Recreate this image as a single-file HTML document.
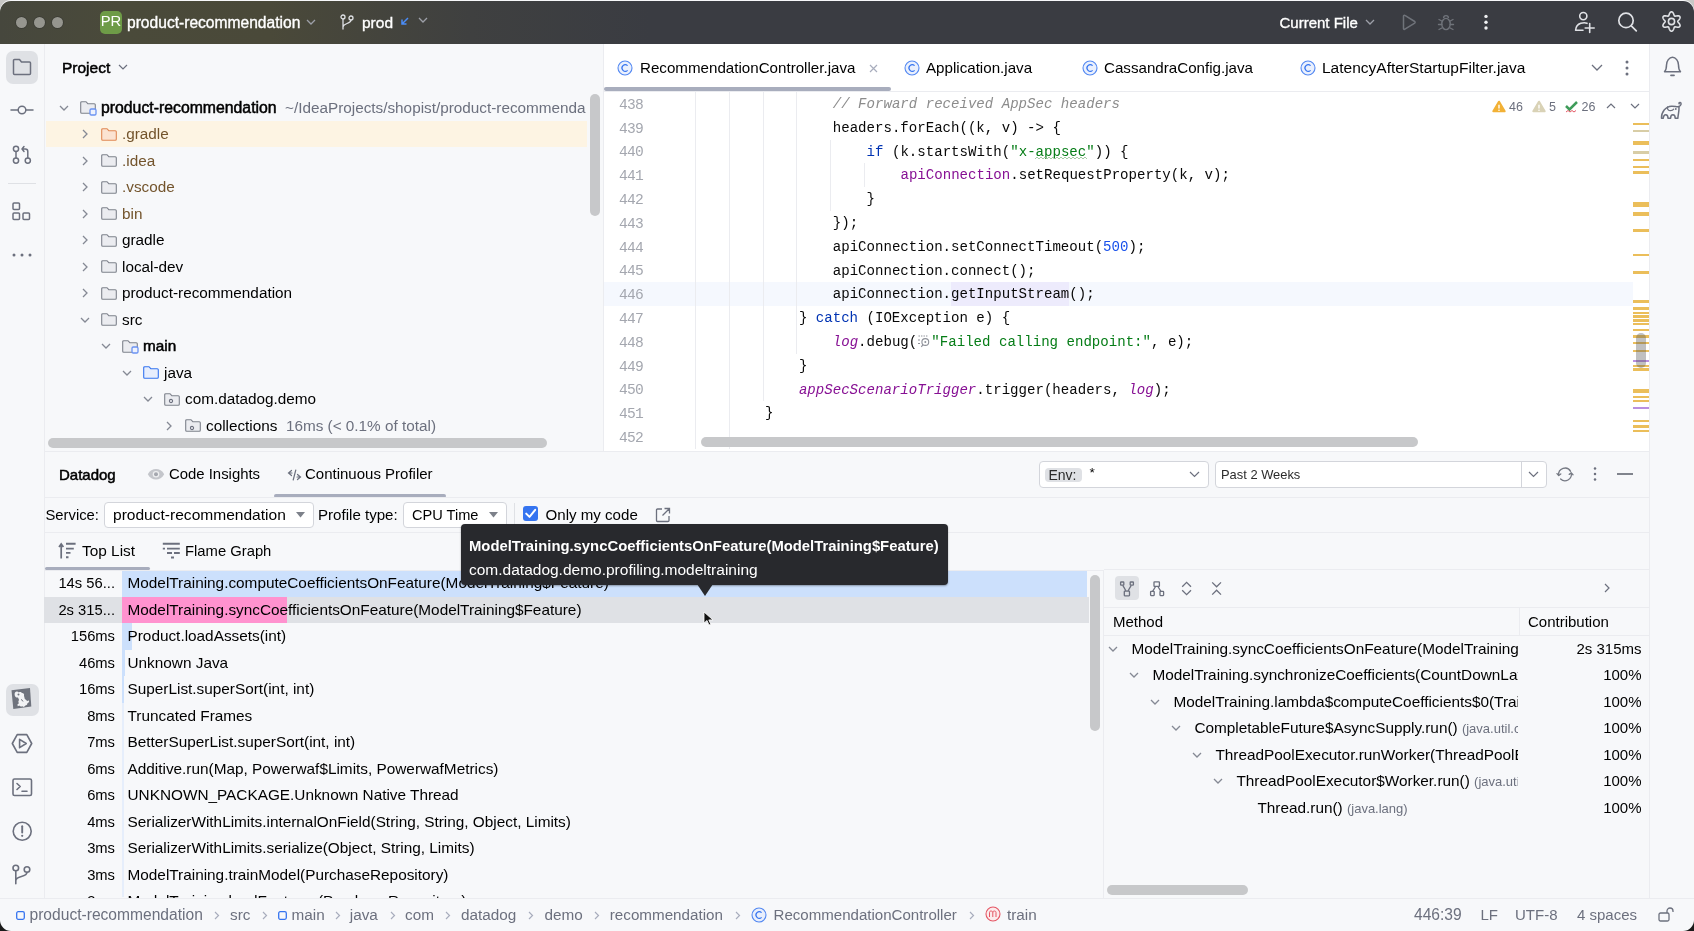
<!DOCTYPE html><html><head><meta charset="utf-8"><style>
*{margin:0;padding:0;box-sizing:border-box}
html,body{width:1694px;height:931px;overflow:hidden;background:#1a1a1a}
body{font-family:"Liberation Sans",sans-serif;font-size:15px;color:#000;position:relative}
.a{position:absolute;white-space:nowrap}
.t{position:absolute;white-space:nowrap;line-height:20px;height:20px}
svg{position:absolute;overflow:visible}
#win{will-change:transform;position:absolute;left:0;top:0;width:1694px;height:931px;background:#F7F8FA;border-radius:11px;overflow:hidden}
#topbg{position:absolute;left:0;top:0;width:1694px;height:14px;background:#c8c8c6}
#title{position:absolute;left:0;top:1px;width:1694px;height:43px;background:linear-gradient(90deg,#46473D 0px,#4A4A3A 120px,#4A4939 270px,#3F4040 470px,#3A3C42 650px,#3A3C42 100%);border-radius:11px 11px 0 0}
.tl{position:absolute;top:15.8px;width:11px;height:11px;border-radius:6px;background:#96968F;box-shadow:0 0 0 0.8px #3a3b34}
.wt{color:#fff}.med{-webkit-text-stroke:0.35px currentColor}.sbd{-webkit-text-stroke:0.5px currentColor}
.b{position:absolute;background:#EBECF0}
.g{color:#6C707E}
.ign{color:#73542C}
.code{position:absolute;font-family:"Liberation Mono",monospace;font-size:14.08px;line-height:24px;height:24px;white-space:pre;color:#080808}
.kw{color:#0033B3}.str{color:#067D17}.num{color:#1750EB}.fld{color:#871094}.cmt{color:#8C8C8C;font-style:italic}.it{font-style:italic}
.ln{position:absolute;font-family:"Liberation Mono",monospace;font-size:14.6px;letter-spacing:-0.85px;line-height:24px;height:24px;color:#A4A7AF;text-align:right;width:50.85px}
.sb{position:absolute;background:#C7C8CA;border-radius:5px}
.combo{position:absolute;background:#fff;border:1px solid #D3D5DB;border-radius:4px}
.ic{stroke:#6C707E;fill:none;stroke-width:1.3;stroke-linecap:round;stroke-linejoin:round}
</style></head><body>
<div id="topbg"></div><div id="win">
<div id="title">
<div class="tl" style="left:16.2px"></div>
<div class="tl" style="left:34px"></div>
<div class="tl" style="left:51.9px"></div>
</div>
<div class="a" style="left:100px;top:11px;width:22px;height:23px;background:#6E9B47;border-radius:5px"></div>
<div class="t wt" style="left:100px;top:11.30px;line-height:20px;height:20px;font-size:14.8px;width:22px;text-align:center;">PR</div>
<div class="t wt med" style="left:127px;top:12.80px;line-height:20px;height:20px;font-size:15.6px;">product-recommendation</div>
<svg style="left:306px;top:19px" width="10" height="6" viewBox="0 0 10 6" ><path d="M1 1l4 4 4-4" stroke="#9DA0A8" stroke-width="1.3" fill="none"/></svg>
<svg style="left:340px;top:14px" width="14" height="16" viewBox="0 0 14 16" ><circle cx="3" cy="3" r="2" class="ic" style="stroke:#DFE1E5"/><circle cx="11" cy="4" r="2" class="ic" style="stroke:#DFE1E5"/><path d="M3 5v10M11 6c0 4-8 3-8 7" class="ic" style="stroke:#DFE1E5"/></svg>
<div class="t wt med" style="left:362px;top:12.80px;line-height:20px;height:20px;font-size:15.5px;">prod</div>
<svg style="left:401px;top:17px" width="8" height="8" viewBox="0 0 8 8" ><path d="M7 1L1 7M1 2.5V7h4.5" stroke="#4B8DF8" stroke-width="1.5" fill="none"/></svg>
<svg style="left:418px;top:17px" width="10" height="6" viewBox="0 0 10 6" ><path d="M1 1l4 4 4-4" stroke="#9DA0A8" stroke-width="1.3" fill="none"/></svg>
<div class="t wt med" style="left:1279.5px;top:12.60px;line-height:20px;height:20px;font-size:15px;">Current File</div>
<svg style="left:1365px;top:19px" width="10" height="6" viewBox="0 0 10 6" ><path d="M1 1l4 4 4-4" stroke="#9DA0A8" stroke-width="1.3" fill="none"/></svg>
<svg style="left:1401px;top:14px" width="16" height="17" viewBox="0 0 16 17" ><path d="M2.5 2.2v12.2c0 .8.8 1.2 1.4.8l9.8-6.1c.6-.4.6-1.2 0-1.6L3.9 1.4c-.6-.4-1.4 0-1.4.8z" fill="none" stroke="#6F737A" stroke-width="1.5" stroke-linejoin="round"/></svg>
<svg style="left:1437px;top:13px" width="18" height="18" viewBox="0 0 18 18" ><path d="M6.6 5a2.4 2.4 0 0 1 4.8 0" fill="none" stroke="#6F737A" stroke-width="1.4"/><ellipse cx="9" cy="11" rx="4.2" ry="5.6" fill="none" stroke="#6F737A" stroke-width="1.4"/><path d="M4.8 8L2 6.5M4.8 11.5H1.5M4.8 15L2 16.5M13.2 8L16 6.5M13.2 11.5h3.3M13.2 15l2.8 1.5" fill="none" stroke="#6F737A" stroke-width="1.4" stroke-linecap="round"/></svg>
<svg style="left:1484px;top:13px" width="4" height="18" viewBox="0 0 4 18" ><circle cx="2" cy="3.4" r="1.7" fill="#F0F1F3"/><circle cx="2" cy="9.2" r="1.7" fill="#F0F1F3"/><circle cx="2" cy="15" r="1.7" fill="#F0F1F3"/></svg>
<svg style="left:1573px;top:12px" width="22" height="22" viewBox="0 0 22 22" ><circle cx="10.3" cy="4.1" r="3.6" fill="none" stroke="#DFE1E5" stroke-width="1.6"/><path d="M14 11.3C12 10.3 3.2 10 2.6 18.2H10" fill="none" stroke="#DFE1E5" stroke-width="1.6" stroke-linecap="round" stroke-linejoin="round"/><path d="M16.7 11.5v9M12.2 16h9" stroke="#DFE1E5" stroke-width="1.6" stroke-linecap="round"/></svg>
<svg style="left:1617px;top:11px" width="22" height="22" viewBox="0 0 22 22" ><circle cx="9" cy="9.4" r="7.2" fill="none" stroke="#DFE1E5" stroke-width="1.7"/><path d="M14.3 14.8l5 5" stroke="#DFE1E5" stroke-width="1.7" stroke-linecap="round"/></svg>
<svg style="left:1661px;top:11px" width="21" height="21" viewBox="0 0 21 21" ><path d="M10.50 0.80 L11.00 0.90 L11.48 1.18 L11.91 1.61 L12.27 2.16 L12.57 2.77 L12.81 3.39 L13.01 3.96 L13.19 4.45 L13.40 4.81 L13.65 5.04 L13.98 5.15 L14.39 5.14 L14.91 5.06 L15.50 4.95 L16.16 4.84 L16.84 4.80 L17.49 4.84 L18.08 4.99 L18.57 5.26 L18.90 5.65 L19.07 6.13 L19.06 6.69 L18.90 7.27 L18.61 7.87 L18.23 8.43 L17.81 8.95 L17.41 9.40 L17.09 9.81 L16.87 10.17 L16.80 10.50 L16.87 10.83 L17.09 11.19 L17.41 11.60 L17.81 12.05 L18.23 12.57 L18.61 13.13 L18.90 13.73 L19.06 14.31 L19.07 14.87 L18.90 15.35 L18.57 15.74 L18.08 16.01 L17.49 16.16 L16.84 16.20 L16.16 16.16 L15.50 16.05 L14.91 15.94 L14.39 15.86 L13.98 15.85 L13.65 15.96 L13.40 16.19 L13.19 16.55 L13.01 17.04 L12.81 17.61 L12.57 18.23 L12.27 18.84 L11.91 19.39 L11.48 19.82 L11.00 20.10 L10.50 20.20 L10.00 20.10 L9.52 19.82 L9.09 19.39 L8.73 18.84 L8.43 18.23 L8.19 17.61 L7.99 17.04 L7.81 16.55 L7.60 16.19 L7.35 15.96 L7.02 15.85 L6.61 15.86 L6.09 15.94 L5.50 16.05 L4.84 16.16 L4.16 16.20 L3.51 16.16 L2.92 16.01 L2.43 15.74 L2.10 15.35 L1.93 14.87 L1.94 14.31 L2.10 13.73 L2.39 13.13 L2.77 12.57 L3.19 12.05 L3.59 11.60 L3.91 11.19 L4.13 10.83 L4.20 10.50 L4.13 10.17 L3.91 9.81 L3.59 9.40 L3.19 8.95 L2.77 8.43 L2.39 7.87 L2.10 7.27 L1.94 6.69 L1.93 6.13 L2.10 5.65 L2.43 5.26 L2.92 4.99 L3.51 4.84 L4.16 4.80 L4.84 4.84 L5.50 4.95 L6.09 5.06 L6.61 5.14 L7.02 5.15 L7.35 5.04 L7.60 4.81 L7.81 4.45 L7.99 3.96 L8.19 3.39 L8.43 2.77 L8.73 2.16 L9.09 1.61 L9.52 1.18 L10.00 0.90 L10.50 0.80Z" fill="none" stroke="#DFE1E5" stroke-width="1.6" stroke-linejoin="round"/><circle cx="10.5" cy="10.5" r="3.1" fill="none" stroke="#DFE1E5" stroke-width="1.6"/></svg>
<div class="a" style="left:43.5px;top:44px;width:1px;height:854px;background:#EBECF0;"></div>
<div class="a" style="left:6px;top:51px;width:32px;height:33px;background:#DFE1E5;border-radius:7px"></div>
<svg style="left:12px;top:58px" width="20" height="18" viewBox="0 0 20 18" ><path d="M1.5 2.5a1 1 0 0 1 1-1h5l2 2.5h8a1 1 0 0 1 1 1v10.5a1 1 0 0 1-1 1h-15a1 1 0 0 1-1-1z" class="ic" style="stroke-width:1.5"/></svg>
<svg style="left:10px;top:103px" width="24" height="14" viewBox="0 0 24 14" ><path d="M1 7h7M16 7h7" class="ic" style="stroke-width:1.5"/><circle cx="12" cy="7" r="3.8" class="ic" style="stroke-width:1.5"/></svg>
<svg style="left:12px;top:145px" width="20" height="20" viewBox="0 0 20 20" ><circle cx="4" cy="3.8" r="2.6" class="ic" style="stroke-width:1.5"/><circle cx="4" cy="15.6" r="2.6" class="ic" style="stroke-width:1.5"/><circle cx="15.8" cy="15.6" r="2.6" class="ic" style="stroke-width:1.5"/><path d="M4 6.4v6.6M15.8 13V6.5c0-1.5-1-2.5-2.5-2.5H10M12 1.5l-2 2.5 2 2.5" class="ic" style="stroke-width:1.5"/></svg>
<div class="a" style="left:8px;top:183px;width:28px;height:1px;background:#DFE1E5;"></div>
<svg style="left:12px;top:202px" width="20" height="20" viewBox="0 0 20 20" ><rect x="1" y="1" width="6.5" height="6.5" rx="1" class="ic" style="stroke-width:1.5"/><rect x="1" y="11" width="6.5" height="6.5" rx="1" class="ic" style="stroke-width:1.5"/><rect x="11" y="11" width="6.5" height="6.5" rx="1" class="ic" style="stroke-width:1.5"/></svg>
<svg style="left:12px;top:253px" width="20" height="4" viewBox="0 0 20 4" ><circle cx="2" cy="2" r="1.5" fill="#6C707E"/><circle cx="10" cy="2" r="1.5" fill="#6C707E"/><circle cx="18" cy="2" r="1.5" fill="#6C707E"/></svg>
<div class="a" style="left:6px;top:683.5px;width:32.5px;height:32.5px;background:#DFE1E5;border-radius:7px"></div>
<svg style="left:11px;top:687px" width="22" height="24" viewBox="0 0 22 24" ><path d="M.5 3.2L19 1l1.3 18.5L2.3 22z" fill="#6F737D"/><path d="M4 5.5c1.2-1.5 3-1.2 3.8 0 1-.8 2.6-.6 3 .6 1.5-.2 2.7 1 2.2 2.6l.8 3.2c1 .5 2 1.2 2.2 2.3l1.6-1 .6 1.8-1.8 1.3c.2 1.2-.8 2.1-2 2.1l-1.5 1.6-1.6-.8c-1 .5-2.3.3-3-.6l-1.5.6-.4-1.6 1.5-1.4c-.8-1-.7-2.3.2-3.1L7 10.5C5.5 10.8 4 10 3.8 8.5 3.6 7.3 3.5 6.3 4 5.5z" fill="#F2F3F5"/><circle cx="7.5" cy="7.5" r="1" fill="#6F737D"/><path d="M10 12.5c1 .3 1.8 1 2 2" stroke="#6F737D" stroke-width="1" fill="none"/></svg>
<svg style="left:11px;top:733px" width="22" height="21" viewBox="0 0 22 21" ><path d="M6.2 1.6h9.6l4.9 8.9-4.9 8.9H6.2l-4.9-8.9z" class="ic" style="stroke-width:1.6"/><path d="M8.6 6.3l6.6 4.2-6.6 4.2z" class="ic" style="stroke-width:1.6"/></svg>
<svg style="left:11.5px;top:778px" width="21" height="19" viewBox="0 0 21 19" ><rect x="1" y="1" width="18.5" height="16.5" rx="1.5" class="ic" style="stroke-width:1.6"/><path d="M5 5.5l3.2 3L5 11.5M10 13.2h5" class="ic" style="stroke-width:1.6"/></svg>
<svg style="left:11.5px;top:821px" width="21" height="21" viewBox="0 0 21 21" ><circle cx="10.2" cy="10.2" r="9" class="ic" style="stroke-width:1.6"/><path d="M10.2 5.2v6.3" class="ic" style="stroke-width:1.9"/><circle cx="10.2" cy="14.8" r="1.1" fill="#6C707E"/></svg>
<svg style="left:12px;top:864px" width="20" height="21" viewBox="0 0 20 21" ><circle cx="3.8" cy="4" r="2.8" class="ic" style="stroke-width:1.6"/><circle cx="15" cy="5.5" r="2.8" class="ic" style="stroke-width:1.6"/><path d="M3.8 6.8v13M15 8.3c0 5.5-11.2 3-11.2 8.5" class="ic" style="stroke-width:1.6"/></svg>
<div class="t sbd" style="left:62px;top:57.50px;line-height:20px;height:20px;font-size:15.5px;">Project</div>
<svg style="left:118px;top:64px" width="10" height="6" viewBox="0 0 10 6" ><path d="M1 1l4 4 4-4" stroke="#6C707E" stroke-width="1.2" fill="none"/></svg>
<div class="a" style="left:46px;top:121px;width:541px;height:26px;background:#FDF4E3;"></div>
<svg style="left:59px;top:104.5px" width="10" height="6" viewBox="0 0 10 6" ><path d="M1 1l4 4 4-4" stroke="#858994" stroke-width="1.3" fill="none"/></svg>
<svg style="left:80px;top:101.0px" width="16" height="13" viewBox="0 0 16 13" ><path d="M.7 1.7a1 1 0 0 1 1-1h4.3l1.8 2h6.5a1 1 0 0 1 1 1v7.6a1 1 0 0 1-1 1h-12.6a1 1 0 0 1-1-1z" fill="#EBECF0" stroke="#7E828C" stroke-width="1.1"/></svg>
<svg style="left:89px;top:107.5px" width="8" height="8" viewBox="0 0 8 8" ><rect x="1" y="1" width="6" height="6" rx="1.3" fill="#EEF2FD" stroke="#6A92F2" stroke-width="1.3"/></svg>
<div class="t " style="left:101px;top:97.50px;line-height:20px;height:20px;font-size:15.3px;"><span class="sbd" style="font-size:15.8px">product-recommendation</span><span class="g" style="position:absolute;left:184px">~/IdeaProjects/shopist/product-recommenda</span></div>
<svg style="left:82px;top:129.0px" width="6" height="10" viewBox="0 0 6 10" ><path d="M1 1l4 4-4 4" stroke="#858994" stroke-width="1.3" fill="none"/></svg>
<svg style="left:101px;top:127.5px" width="16" height="13" viewBox="0 0 16 13" ><path d="M.7 1.7a1 1 0 0 1 1-1h4.3l1.8 2h6.5a1 1 0 0 1 1 1v7.6a1 1 0 0 1-1 1h-12.6a1 1 0 0 1-1-1z" fill="#FBE3D2" stroke="#E08855" stroke-width="1.1"/></svg>
<div class="t " style="left:122px;top:124.00px;line-height:20px;height:20px;font-size:15.3px;"><span class="ign">.gradle</span></div>
<svg style="left:82px;top:155.5px" width="6" height="10" viewBox="0 0 6 10" ><path d="M1 1l4 4-4 4" stroke="#858994" stroke-width="1.3" fill="none"/></svg>
<svg style="left:101px;top:154.0px" width="16" height="13" viewBox="0 0 16 13" ><path d="M.7 1.7a1 1 0 0 1 1-1h4.3l1.8 2h6.5a1 1 0 0 1 1 1v7.6a1 1 0 0 1-1 1h-12.6a1 1 0 0 1-1-1z" fill="#EBECF0" stroke="#7E828C" stroke-width="1.1"/></svg>
<div class="t " style="left:122px;top:150.50px;line-height:20px;height:20px;font-size:15.3px;"><span class="ign">.idea</span></div>
<svg style="left:82px;top:182.0px" width="6" height="10" viewBox="0 0 6 10" ><path d="M1 1l4 4-4 4" stroke="#858994" stroke-width="1.3" fill="none"/></svg>
<svg style="left:101px;top:180.5px" width="16" height="13" viewBox="0 0 16 13" ><path d="M.7 1.7a1 1 0 0 1 1-1h4.3l1.8 2h6.5a1 1 0 0 1 1 1v7.6a1 1 0 0 1-1 1h-12.6a1 1 0 0 1-1-1z" fill="#EBECF0" stroke="#7E828C" stroke-width="1.1"/></svg>
<div class="t " style="left:122px;top:177.00px;line-height:20px;height:20px;font-size:15.3px;"><span class="ign">.vscode</span></div>
<svg style="left:82px;top:208.5px" width="6" height="10" viewBox="0 0 6 10" ><path d="M1 1l4 4-4 4" stroke="#858994" stroke-width="1.3" fill="none"/></svg>
<svg style="left:101px;top:207.0px" width="16" height="13" viewBox="0 0 16 13" ><path d="M.7 1.7a1 1 0 0 1 1-1h4.3l1.8 2h6.5a1 1 0 0 1 1 1v7.6a1 1 0 0 1-1 1h-12.6a1 1 0 0 1-1-1z" fill="#EBECF0" stroke="#7E828C" stroke-width="1.1"/></svg>
<div class="t " style="left:122px;top:203.50px;line-height:20px;height:20px;font-size:15.3px;"><span class="ign">bin</span></div>
<svg style="left:82px;top:235.0px" width="6" height="10" viewBox="0 0 6 10" ><path d="M1 1l4 4-4 4" stroke="#858994" stroke-width="1.3" fill="none"/></svg>
<svg style="left:101px;top:233.5px" width="16" height="13" viewBox="0 0 16 13" ><path d="M.7 1.7a1 1 0 0 1 1-1h4.3l1.8 2h6.5a1 1 0 0 1 1 1v7.6a1 1 0 0 1-1 1h-12.6a1 1 0 0 1-1-1z" fill="#EBECF0" stroke="#7E828C" stroke-width="1.1"/></svg>
<div class="t " style="left:122px;top:230.00px;line-height:20px;height:20px;font-size:15.3px;">gradle</div>
<svg style="left:82px;top:261.5px" width="6" height="10" viewBox="0 0 6 10" ><path d="M1 1l4 4-4 4" stroke="#858994" stroke-width="1.3" fill="none"/></svg>
<svg style="left:101px;top:260.0px" width="16" height="13" viewBox="0 0 16 13" ><path d="M.7 1.7a1 1 0 0 1 1-1h4.3l1.8 2h6.5a1 1 0 0 1 1 1v7.6a1 1 0 0 1-1 1h-12.6a1 1 0 0 1-1-1z" fill="#EBECF0" stroke="#7E828C" stroke-width="1.1"/></svg>
<div class="t " style="left:122px;top:256.50px;line-height:20px;height:20px;font-size:15.3px;">local-dev</div>
<svg style="left:82px;top:288.0px" width="6" height="10" viewBox="0 0 6 10" ><path d="M1 1l4 4-4 4" stroke="#858994" stroke-width="1.3" fill="none"/></svg>
<svg style="left:101px;top:286.5px" width="16" height="13" viewBox="0 0 16 13" ><path d="M.7 1.7a1 1 0 0 1 1-1h4.3l1.8 2h6.5a1 1 0 0 1 1 1v7.6a1 1 0 0 1-1 1h-12.6a1 1 0 0 1-1-1z" fill="#EBECF0" stroke="#7E828C" stroke-width="1.1"/></svg>
<div class="t " style="left:122px;top:283.00px;line-height:20px;height:20px;font-size:15.3px;">product-recommendation</div>
<svg style="left:80px;top:316.5px" width="10" height="6" viewBox="0 0 10 6" ><path d="M1 1l4 4 4-4" stroke="#858994" stroke-width="1.3" fill="none"/></svg>
<svg style="left:101px;top:313.0px" width="16" height="13" viewBox="0 0 16 13" ><path d="M.7 1.7a1 1 0 0 1 1-1h4.3l1.8 2h6.5a1 1 0 0 1 1 1v7.6a1 1 0 0 1-1 1h-12.6a1 1 0 0 1-1-1z" fill="#EBECF0" stroke="#7E828C" stroke-width="1.1"/></svg>
<div class="t " style="left:122px;top:309.50px;line-height:20px;height:20px;font-size:15.3px;">src</div>
<svg style="left:101px;top:343.0px" width="10" height="6" viewBox="0 0 10 6" ><path d="M1 1l4 4 4-4" stroke="#858994" stroke-width="1.3" fill="none"/></svg>
<svg style="left:122px;top:339.5px" width="16" height="13" viewBox="0 0 16 13" ><path d="M.7 1.7a1 1 0 0 1 1-1h4.3l1.8 2h6.5a1 1 0 0 1 1 1v7.6a1 1 0 0 1-1 1h-12.6a1 1 0 0 1-1-1z" fill="#EBECF0" stroke="#7E828C" stroke-width="1.1"/></svg>
<svg style="left:131px;top:346.0px" width="8" height="8" viewBox="0 0 8 8" ><rect x="1" y="1" width="6" height="6" rx="1.3" fill="#EEF2FD" stroke="#6A92F2" stroke-width="1.3"/></svg>
<div class="t " style="left:143px;top:336.00px;line-height:20px;height:20px;font-size:15.3px;"><span class="sbd">main</span></div>
<svg style="left:122px;top:369.5px" width="10" height="6" viewBox="0 0 10 6" ><path d="M1 1l4 4 4-4" stroke="#858994" stroke-width="1.3" fill="none"/></svg>
<svg style="left:143px;top:366.0px" width="16" height="13" viewBox="0 0 16 13" ><path d="M.7 1.7a1 1 0 0 1 1-1h4.3l1.8 2h6.5a1 1 0 0 1 1 1v7.6a1 1 0 0 1-1 1h-12.6a1 1 0 0 1-1-1z" fill="#E7EEFD" stroke="#3574F0" stroke-width="1.1"/></svg>
<div class="t " style="left:164px;top:362.50px;line-height:20px;height:20px;font-size:15.3px;">java</div>
<svg style="left:143px;top:396.0px" width="10" height="6" viewBox="0 0 10 6" ><path d="M1 1l4 4 4-4" stroke="#858994" stroke-width="1.3" fill="none"/></svg>
<svg style="left:164px;top:392.5px" width="16" height="13" viewBox="0 0 16 13" ><path d="M.7 1.7a1 1 0 0 1 1-1h4.3l1.8 2h6.5a1 1 0 0 1 1 1v7.6a1 1 0 0 1-1 1h-12.6a1 1 0 0 1-1-1z" fill="#EBECF0" stroke="#7E828C" stroke-width="1.1"/></svg>
<svg style="left:168px;top:398.0px" width="6" height="6" viewBox="0 0 6 6" ><circle cx="3" cy="3" r="1.6" fill="none" stroke="#6C707E" stroke-width="1.1"/></svg>
<div class="t " style="left:185px;top:389.00px;line-height:20px;height:20px;font-size:15.3px;">com.datadog.demo</div>
<svg style="left:166px;top:420.5px" width="6" height="10" viewBox="0 0 6 10" ><path d="M1 1l4 4-4 4" stroke="#858994" stroke-width="1.3" fill="none"/></svg>
<svg style="left:185px;top:419.0px" width="16" height="13" viewBox="0 0 16 13" ><path d="M.7 1.7a1 1 0 0 1 1-1h4.3l1.8 2h6.5a1 1 0 0 1 1 1v7.6a1 1 0 0 1-1 1h-12.6a1 1 0 0 1-1-1z" fill="#EBECF0" stroke="#7E828C" stroke-width="1.1"/></svg>
<svg style="left:189px;top:424.5px" width="6" height="6" viewBox="0 0 6 6" ><circle cx="3" cy="3" r="1.6" fill="none" stroke="#6C707E" stroke-width="1.1"/></svg>
<div class="t " style="left:206px;top:415.50px;line-height:20px;height:20px;font-size:15.3px;">collections <span class="g">&nbsp;16ms (&lt; 0.1% of total)</span></div>
<div class="sb" style="left:590px;top:94px;width:10px;height:122px"></div>
<div class="sb" style="left:48px;top:438px;width:499px;height:10px"></div>
<div class="a" style="left:603.5px;top:44px;width:1046px;height:407px;background:#FFFFFF;"></div>
<div class="a" style="left:603px;top:44px;width:1px;height:407px;background:#EBECF0;"></div>
<div class="a" style="left:604px;top:90.5px;width:1045px;height:1px;background:#EBECF0;"></div>
<svg style="left:617px;top:60px" width="16" height="16" viewBox="0 0 16 16" ><circle cx="8" cy="8" r="7" fill="#E7EEFD" stroke="#3574F0" stroke-width="1.1" opacity=".85"/><path d="M10.6 5.6a3.3 3.3 0 1 0 0 4.8" fill="none" stroke="#3574F0" stroke-width="1.2"/></svg>
<div class="t " style="left:640px;top:58.00px;line-height:20px;height:20px;font-size:15.15px;">RecommendationController.java</div>
<svg style="left:869px;top:64px" width="9" height="9" viewBox="0 0 9 9" ><path d="M1 1l7 7M8 1L1 8" stroke="#A8ADBD" stroke-width="1.2"/></svg>
<div class="a" style="left:604px;top:87px;width:287px;height:3.5px;background:#A8ADBD;border-radius:2px"></div>
<svg style="left:904px;top:60px" width="16" height="16" viewBox="0 0 16 16" ><circle cx="8" cy="8" r="7" fill="#E7EEFD" stroke="#3574F0" stroke-width="1.1" opacity=".85"/><path d="M10.6 5.6a3.3 3.3 0 1 0 0 4.8" fill="none" stroke="#3574F0" stroke-width="1.2"/></svg>
<div class="t " style="left:926px;top:58.00px;line-height:20px;height:20px;font-size:15.15px;">Application.java</div>
<svg style="left:1082px;top:60px" width="16" height="16" viewBox="0 0 16 16" ><circle cx="8" cy="8" r="7" fill="#E7EEFD" stroke="#3574F0" stroke-width="1.1" opacity=".85"/><path d="M10.6 5.6a3.3 3.3 0 1 0 0 4.8" fill="none" stroke="#3574F0" stroke-width="1.2"/></svg>
<div class="t " style="left:1104px;top:58.00px;line-height:20px;height:20px;font-size:15.15px;">CassandraConfig.java</div>
<svg style="left:1300px;top:60px" width="16" height="16" viewBox="0 0 16 16" ><circle cx="8" cy="8" r="7" fill="#E7EEFD" stroke="#3574F0" stroke-width="1.1" opacity=".85"/><path d="M10.6 5.6a3.3 3.3 0 1 0 0 4.8" fill="none" stroke="#3574F0" stroke-width="1.2"/></svg>
<div class="t " style="left:1322px;top:58.00px;line-height:20px;height:20px;font-size:15.5px;">LatencyAfterStartupFilter.java</div>
<svg style="left:1591px;top:64px" width="12" height="7" viewBox="0 0 12 7" ><path d="M1 1l5 5 5-5" stroke="#6C707E" stroke-width="1.3" fill="none"/></svg>
<svg style="left:1625px;top:60px" width="4" height="16" viewBox="0 0 4 16" ><circle cx="2" cy="2" r="1.5" fill="#6C707E"/><circle cx="2" cy="8" r="1.5" fill="#6C707E"/><circle cx="2" cy="14" r="1.5" fill="#6C707E"/></svg>
<div class="a" style="left:604px;top:282px;width:1029px;height:24px;background:#F5F8FE;"></div>
<div class="a" style="left:951px;top:282px;width:118px;height:24px;background:#EDEBFC;"></div>
<div class="a" style="left:694.9px;top:92.0px;width:1px;height:356.84999999999997px;background:#EBECF0;"></div>
<div class="a" style="left:728.7px;top:92.0px;width:1px;height:356.84999999999997px;background:#EBECF0;"></div>
<div class="a" style="left:762.6px;top:92.0px;width:1px;height:309.27px;background:#EBECF0;"></div>
<div class="a" style="left:796.4px;top:92.0px;width:1px;height:261.69px;background:#EBECF0;"></div>
<div class="a" style="left:830.3px;top:139.57999999999998px;width:1px;height:71.37px;background:#EBECF0;"></div>
<div class="a" style="left:864.1px;top:163.37px;width:1px;height:23.79px;background:#EBECF0;"></div>
<div class="ln" style="left:592px;top:92.90px">438</div>
<div class="code" style="left:832.76px;top:92.10px"><span class="cmt">// Forward received AppSec headers</span></div>
<div class="ln" style="left:592px;top:116.69px">439</div>
<div class="code" style="left:832.76px;top:115.89px">headers.forEach((k, v) -&gt; {</div>
<div class="ln" style="left:592px;top:140.48px">440</div>
<div class="code" style="left:866.60px;top:139.68px"><span class="kw">if</span> (k.startsWith(<span class="str">"x-appsec"</span>)) {</div>
<div class="ln" style="left:592px;top:164.27px">441</div>
<div class="code" style="left:900.44px;top:163.47px"><span class="fld">apiConnection</span>.setRequestProperty(k, v);</div>
<div class="ln" style="left:592px;top:188.06px">442</div>
<div class="code" style="left:866.60px;top:187.26px">}</div>
<div class="ln" style="left:592px;top:211.85px">443</div>
<div class="code" style="left:832.76px;top:211.05px">});</div>
<div class="ln" style="left:592px;top:235.64px">444</div>
<div class="code" style="left:832.76px;top:234.84px">apiConnection.setConnectTimeout(<span class="num">500</span>);</div>
<div class="ln" style="left:592px;top:259.43px">445</div>
<div class="code" style="left:832.76px;top:258.63px">apiConnection.connect();</div>
<div class="ln" style="left:592px;top:283.22px">446</div>
<div class="code" style="left:832.76px;top:282.42px">apiConnection.getInputStream();</div>
<div class="ln" style="left:592px;top:307.01px">447</div>
<div class="code" style="left:798.92px;top:306.21px">} <span class="kw">catch</span> (IOException e) {</div>
<div class="ln" style="left:592px;top:330.80px">448</div>
<div class="code" style="left:832.76px;top:330.00px"><span class="fld it">log</span>.debug(<span style="color:#999">&#x2003;</span><span class="str">"Failed calling endpoint:"</span>, e);</div>
<div class="ln" style="left:592px;top:354.59px">449</div>
<div class="code" style="left:798.92px;top:353.79px">}</div>
<div class="ln" style="left:592px;top:378.38px">450</div>
<div class="code" style="left:798.92px;top:377.58px"><span class="fld it">appSecScenarioTrigger</span>.trigger(headers, <span class="fld it">log</span>);</div>
<div class="ln" style="left:592px;top:402.17px">451</div>
<div class="code" style="left:765.08px;top:401.37px">}</div>
<div class="ln" style="left:592px;top:425.96px">452</div>
<div class="code" style="left:697.40px;top:425.16px"></div>
<svg style="left:1035px;top:157px" width="52" height="3" viewBox="0 0 52 3" ><path d="M0 2 l2 -2 l2 2 l2 -2 l2 2 l2 -2 l2 2 l2 -2 l2 2 l2 -2 l2 2 l2 -2 l2 2 l2 -2 l2 2 l2 -2 l2 2 l2 -2 l2 2 l2 -2 l2 2 l2 -2 l2 2 l2 -2 l2 2 l2 -2 l2 2" fill="none" stroke="#9CC49C" stroke-width="0.9"/></svg>
<svg style="left:917px;top:334px" width="13" height="14" viewBox="0 0 13 14" ><g fill="none" stroke="#8E9199" stroke-width="1.1"><path d="M1.5 2h10" stroke-dasharray="1.4 1.1"/><path d="M1 6h2M1 9.5h2"/><circle cx="8.3" cy="8" r="3.4"/><path d="M6 10.7L4.3 12.8"/></g><circle cx="8.3" cy="8" r="1" fill="#8E9199"/></svg>
<svg style="left:1492px;top:99.5px" width="14" height="13" viewBox="0 0 14 13" ><path d="M7 1.8L12.6 11.2H1.4z" fill="#F2B136" stroke="#F2B136" stroke-linejoin="round" stroke-width="2.2"/><path d="M7 4.8v3.6" stroke="#fff" stroke-width="1.4"/><circle cx="7" cy="10.2" r=".8" fill="#fff"/></svg>
<div class="t g" style="left:1509px;top:96.50px;line-height:20px;height:20px;font-size:12.5px;">46</div>
<svg style="left:1532px;top:99.5px" width="14" height="13" viewBox="0 0 14 13" ><path d="M7 1.8L12.6 11.2H1.4z" fill="#D9D2B6" stroke="#D9D2B6" stroke-linejoin="round" stroke-width="2.2"/><path d="M7 4.8v3.6" stroke="#fff" stroke-width="1.4"/><circle cx="7" cy="10.2" r=".8" fill="#fff"/></svg>
<div class="t g" style="left:1549px;top:96.50px;line-height:20px;height:20px;font-size:12.5px;">5</div>
<svg style="left:1565px;top:100px" width="13" height="13" viewBox="0 0 13 13" ><path d="M1 6l3.5 3.5L12 2" stroke="#3F9C5A" stroke-width="2.5" fill="none"/><path d="M1 12l2-1.5 2 1.5 2-1.5 2 1.5 2-1.5" stroke="#E55765" stroke-width="1" fill="none"/></svg>
<div class="t g" style="left:1581.5px;top:96.50px;line-height:20px;height:20px;font-size:12.5px;">26</div>
<svg style="left:1606px;top:103px" width="10" height="6" viewBox="0 0 10 6" ><path d="M1 5l4-4 4 4" stroke="#6C707E" stroke-width="1.2" fill="none"/></svg>
<svg style="left:1630px;top:103px" width="10" height="6" viewBox="0 0 10 6" ><path d="M1 1l4 4 4-4" stroke="#6C707E" stroke-width="1.2" fill="none"/></svg>
<div class="a" style="left:1633px;top:122.5px;width:16px;height:2.5px;background:#EBBE5A;"></div>
<div class="a" style="left:1633px;top:129.8px;width:16px;height:2.5px;background:#D8CDA6;"></div>
<div class="a" style="left:1633px;top:140.5px;width:16px;height:4px;background:#EBBE5A;"></div>
<div class="a" style="left:1633px;top:151.2px;width:16px;height:2.5px;background:#D8CDA6;"></div>
<div class="a" style="left:1633px;top:158.7px;width:16px;height:2.5px;background:#EBBE5A;"></div>
<div class="a" style="left:1633px;top:165.9px;width:16px;height:2.5px;background:#EBBE5A;"></div>
<div class="a" style="left:1633px;top:171.3px;width:16px;height:2.5px;background:#EBBE5A;"></div>
<div class="a" style="left:1633px;top:202.3px;width:16px;height:4.5px;background:#EBBE5A;"></div>
<div class="a" style="left:1633px;top:212.1px;width:16px;height:4px;background:#EBBE5A;"></div>
<div class="a" style="left:1633px;top:229.2px;width:16px;height:2.5px;background:#EBBE5A;"></div>
<div class="a" style="left:1633px;top:253.6px;width:16px;height:2.5px;background:#EBBE5A;"></div>
<div class="a" style="left:1633px;top:271.2px;width:16px;height:2.5px;background:#EBBE5A;"></div>
<div class="a" style="left:1633px;top:300.1px;width:16px;height:2.5px;background:#EBBE5A;"></div>
<div class="a" style="left:1633px;top:307.1px;width:16px;height:2.5px;background:#EBBE5A;"></div>
<div class="a" style="left:1633px;top:311.6px;width:16px;height:2.5px;background:#EBBE5A;"></div>
<div class="a" style="left:1633px;top:315.2px;width:16px;height:2.5px;background:#EBBE5A;"></div>
<div class="a" style="left:1633px;top:319.2px;width:16px;height:2.5px;background:#EBBE5A;"></div>
<div class="a" style="left:1633px;top:322.6px;width:16px;height:2.5px;background:#EBBE5A;"></div>
<div class="a" style="left:1633px;top:328.9px;width:16px;height:2.5px;background:#EBBE5A;"></div>
<div class="a" style="left:1633px;top:335.4px;width:16px;height:2.5px;background:#EBBE5A;"></div>
<div class="a" style="left:1633px;top:341.8px;width:16px;height:2.5px;background:#EBBE5A;"></div>
<div class="a" style="left:1633px;top:349.9px;width:16px;height:2.5px;background:#EBBE5A;"></div>
<div class="a" style="left:1633px;top:359.6px;width:16px;height:2.5px;background:#B98FE0;"></div>
<div class="a" style="left:1633px;top:364.6px;width:16px;height:2.5px;background:#EBBE5A;"></div>
<div class="a" style="left:1633px;top:368.2px;width:16px;height:2.5px;background:#EBBE5A;"></div>
<div class="a" style="left:1633px;top:388.5px;width:16px;height:4px;background:#EBBE5A;"></div>
<div class="a" style="left:1633px;top:395.6px;width:16px;height:2.5px;background:#EBBE5A;"></div>
<div class="a" style="left:1633px;top:399.6px;width:16px;height:2.5px;background:#EBBE5A;"></div>
<div class="a" style="left:1633px;top:406.6px;width:16px;height:2.5px;background:#B98FE0;"></div>
<div class="a" style="left:1633px;top:419.9px;width:16px;height:2.5px;background:#EBBE5A;"></div>
<div class="a" style="left:1633px;top:425.4px;width:16px;height:2.5px;background:#EBBE5A;"></div>
<div class="a" style="left:1633px;top:429.9px;width:16px;height:2.5px;background:#EBBE5A;"></div>
<div class="sb" style="left:1635.5px;top:333px;width:10px;height:35px;background:rgba(90,90,90,.38)"></div>
<div class="sb" style="left:701px;top:437px;width:717px;height:10px"></div>
<div class="a" style="left:44px;top:450.5px;width:1605px;height:1px;background:#EBECF0;"></div>
<div class="a" style="left:1649px;top:44px;width:1px;height:854px;background:#EBECF0;"></div>
<svg style="left:1662px;top:56px" width="20" height="21" viewBox="0 0 20 21" ><path d="M2.5 15.8c1.6-1.6 2-3.5 2-6.8 0-4 2.8-7.7 6-7.7s6 3.7 6 7.7c0 3.3.4 5.2 2 6.8z" fill="none" stroke="#6C707E" stroke-width="1.5" stroke-linejoin="round"/><path d="M9 19.3h3" stroke="#6C707E" stroke-width="1.8" stroke-linecap="round"/></svg>
<svg style="left:1660px;top:101px" width="24" height="19" viewBox="0 0 24 19" ><path d="M1.5 17.3C1.3 11 5.5 5.5 11.5 5.2c3.5-.2 5.5 1 7.5.3 2.2-.8 2.8-3.5 1.2-4-1-.3-1.5.6-1 1.3" fill="none" stroke="#6C707E" stroke-width="1.5" stroke-linecap="round"/><path d="M19 5.6c.3 4-.7 7-1.2 11.7h-2.6c0-2.3-1-3.5-2.3-3.5s-2.3 1.2-2.3 3.5H8c0-2.3-1-3.5-2.3-3.5S3.3 15 3.3 17.3H1.5" fill="none" stroke="#6C707E" stroke-width="1.5" stroke-linejoin="round"/><path d="M7.5 6c-.5 2 .8 3.7 3 3.7 1.5 0 2.6-.6 3.2-1.5" fill="none" stroke="#6C707E" stroke-width="1.3" stroke-linecap="round"/><circle cx="15.8" cy="8" r=".9" fill="#6C707E"/></svg>
<div class="t sbd" style="left:59px;top:464.50px;line-height:20px;height:20px;font-size:15px;">Datadog</div>
<svg style="left:147px;top:467.5px" width="18" height="13" viewBox="0 0 18 13" ><path d="M.8 6.3C2.8 2.5 5.8 1 9 1s6.2 1.5 8.2 5.3C15.2 10.1 12.2 11.6 9 11.6S2.8 10.1.8 6.3z" fill="#C4C6CB"/><circle cx="9" cy="6.3" r="3.3" fill="#EDEEF0"/><circle cx="9" cy="6.3" r="2" fill="#A4A7AE"/></svg>
<div class="t " style="left:169px;top:464.00px;line-height:20px;height:20px;font-size:14.9px;">Code Insights</div>
<svg style="left:286.5px;top:469px" width="15" height="12" viewBox="0 0 15 12" ><path d="M4.5 1.5L1.5 4l3 2.5M1.5 4H5M10.5 5.5l3 2.5-3 2.5M13.5 8H10M8.8 1L6.2 11" stroke="#6C707E" stroke-width="1.2" fill="none" stroke-linecap="round"/></svg>
<div class="t " style="left:305px;top:464.00px;line-height:20px;height:20px;font-size:15px;">Continuous Profiler</div>
<div class="a" style="left:274px;top:494px;width:172px;height:3.5px;background:#A8ADBD;border-radius:2px"></div>
<div class="a" style="left:44px;top:497px;width:1605px;height:1px;background:#EBECF0;"></div>
<div class="combo" style="left:1039px;top:461px;width:170px;height:27px"></div>
<div class="a" style="left:1045px;top:468px;width:37px;height:14px;background:#DFE1E5;border-radius:4px"></div>
<div class="t " style="left:1048.5px;top:464.50px;line-height:20px;height:20px;font-size:14px;color:#2b2b2b">Env:</div>
<div class="t " style="left:1089.5px;top:463.00px;line-height:20px;height:20px;font-size:13.6px;">*</div>
<svg style="left:1189px;top:471px" width="11" height="6" viewBox="0 0 11 6" ><path d="M1 1l4.5 4.5L10 1" stroke="#6C707E" stroke-width="1.2" fill="none"/></svg>
<div class="combo" style="left:1215px;top:461px;width:332px;height:27px"></div>
<div class="a" style="left:1521px;top:461px;width:1px;height:27px;background:#D3D5DB;"></div>
<div class="t " style="left:1221px;top:464.50px;line-height:20px;height:20px;font-size:12.9px;color:#2b2b2b">Past 2 Weeks</div>
<svg style="left:1528px;top:471px" width="11" height="6" viewBox="0 0 11 6" ><path d="M1 1l4.5 4.5L10 1" stroke="#6C707E" stroke-width="1.2" fill="none"/></svg>
<svg style="left:1556px;top:465px" width="18" height="18" viewBox="0 0 18 18" ><g fill="none" stroke="#767A84" stroke-width="1.3" stroke-linecap="round" stroke-linejoin="round"><path d="M2.7 10.2A6.4 6.4 0 0 1 14.6 6.3"/><path d="M15.3 8.2A6.4 6.4 0 0 1 4.6 14"/><path d="M1 8.6l1.7 1.9 2.1-1.5"/><path d="M17 9.8l-1.7-1.9-2.1 1.5"/></g></svg>
<svg style="left:1593px;top:466px" width="4" height="16" viewBox="0 0 4 16" ><circle cx="2" cy="2.5" r="1.25" fill="#6C707E"/><circle cx="2" cy="8" r="1.25" fill="#6C707E"/><circle cx="2" cy="13.5" r="1.25" fill="#6C707E"/></svg>
<div class="a" style="left:1617px;top:473.2px;width:15.5px;height:1.6px;background:#80848D;"></div>
<div class="t " style="left:45.5px;top:505.00px;line-height:20px;height:20px;font-size:14.8px;">Service:</div>
<div class="combo" style="left:104px;top:501.5px;width:210px;height:26px"></div>
<div class="t " style="left:113px;top:505.00px;line-height:20px;height:20px;font-size:15.55px;">product-recommendation</div>
<svg style="left:295.5px;top:512.3px" width="9" height="6" viewBox="0 0 9 6" ><path d="M0 0h9L4.5 5.6z" fill="#7D818A"/></svg>
<div class="t " style="left:318px;top:505.00px;line-height:20px;height:20px;font-size:15.1px;">Profile type:</div>
<div class="combo" style="left:403px;top:501.5px;width:104px;height:26px"></div>
<div class="t " style="left:412px;top:505.00px;line-height:20px;height:20px;font-size:14.6px;">CPU Time</div>
<svg style="left:489px;top:512px" width="9" height="6" viewBox="0 0 9 6" ><path d="M0 0h9L4.5 5.6z" fill="#7D818A"/></svg>
<div class="a" style="left:514px;top:503px;width:1px;height:23px;background:#DFE1E5;"></div>
<div class="a" style="left:523px;top:506.3px;width:15.3px;height:15px;background:#3574F0;border-radius:3px"></div>
<svg style="left:523px;top:506.3px" width="15" height="15" viewBox="0 0 15 15" ><path d="M3.2 7.6l3.3 3.3L12.2 3.8" stroke="#fff" stroke-width="2" fill="none" stroke-linecap="round" stroke-linejoin="round"/></svg>
<div class="t " style="left:545.5px;top:505.00px;line-height:20px;height:20px;font-size:15.1px;">Only my code</div>
<svg style="left:655px;top:507px" width="16" height="16" viewBox="0 0 16 16" ><path d="M7 2H2.5a1 1 0 0 0-1 1v10.5a1 1 0 0 0 1 1H13a1 1 0 0 0 1-1V9M9.5 1.5h5v5M14.5 1.5L7.5 8.5" fill="none" stroke="#6C707E" stroke-width="1.3"/></svg>
<div class="a" style="left:44px;top:531.5px;width:1605px;height:1px;background:#EBECF0;"></div>
<svg style="left:50px;top:538px" width="30" height="28" viewBox="0 0 30 28" ><path d="M11.2 20.5V6.5M9 9l2.2-3 2.2 3" fill="none" stroke="#6C707E" stroke-width="1.7"/><path d="M16 5.8h9.6M16 10.6h7.8M16 14.9h4.5M16 19.2h2.5" fill="none" stroke="#6C707E" stroke-width="1.9"/></svg>
<div class="t " style="left:82px;top:541.00px;line-height:20px;height:20px;font-size:15.4px;">Top List</div>
<svg style="left:150px;top:538px" width="40" height="28" viewBox="0 0 40 28" ><path d="M12.8 5.8h17M12.8 10.6h2.2M17 10.6h12.8M17 15h5M24 15h5.8M21 19.5h3" fill="none" stroke="#6C707E" stroke-width="1.9"/></svg>
<div class="t " style="left:185px;top:541.00px;line-height:20px;height:20px;font-size:14.8px;">Flame Graph</div>
<div class="a" style="left:45px;top:567px;width:105px;height:3px;background:#A8ADBD;border-radius:2px"></div>
<div class="a" style="left:44px;top:569.5px;width:1059px;height:1px;background:#EBECF0;"></div>
<div class="a" style="left:44px;top:570.5px;width:1045px;height:327px;overflow:hidden">
<div class="a" style="left:77.5px;top:0px;width:2.5px;height:326px;background:#E6EEFB;"></div>
<div class="a" style="left:78px;top:0.0px;width:965px;height:26.5px;background:#CCE0FC;"></div>
<div class="t" style="left:0;top:2.90px;width:71px;text-align:right;font-size:14.75px">14s 56...</div>
<div class="t" style="left:83.5px;top:2.90px;font-size:15.35px">ModelTraining.computeCoefficientsOnFeature(ModelTraining$Feature)</div>
<div class="a" style="left:0px;top:26.49px;width:1045px;height:26.5px;background:#DFE1E5;"></div>
<div class="a" style="left:78px;top:26.49px;width:165px;height:26.5px;background:#FF92CF;"></div>
<div class="t" style="left:0;top:29.39px;width:71px;text-align:right;font-size:14.75px">2s 315...</div>
<div class="t" style="left:83.5px;top:29.39px;font-size:15.35px">ModelTraining.syncCoefficientsOnFeature(ModelTraining$Feature)</div>
<div class="a" style="left:78px;top:52.98px;width:9.65px;height:26.5px;background:#CCE0FC;"></div>
<div class="t" style="left:0;top:55.88px;width:71px;text-align:right;font-size:14.75px">156ms</div>
<div class="t" style="left:83.5px;top:55.88px;font-size:15.35px">Product.loadAssets(int)</div>
<div class="a" style="left:78px;top:79.47px;width:2.895px;height:26.5px;background:#CCE0FC;"></div>
<div class="t" style="left:0;top:82.37px;width:71px;text-align:right;font-size:14.75px">46ms</div>
<div class="t" style="left:83.5px;top:82.37px;font-size:15.35px">Unknown Java</div>
<div class="a" style="left:78px;top:105.96px;width:2px;height:26.5px;background:#CCE0FC;"></div>
<div class="t" style="left:0;top:108.86px;width:71px;text-align:right;font-size:14.75px">16ms</div>
<div class="t" style="left:83.5px;top:108.86px;font-size:15.35px">SuperList.superSort(int, int)</div>
<div class="t" style="left:0;top:135.35px;width:71px;text-align:right;font-size:14.75px">8ms</div>
<div class="t" style="left:83.5px;top:135.35px;font-size:15.35px">Truncated Frames</div>
<div class="t" style="left:0;top:161.84px;width:71px;text-align:right;font-size:14.75px">7ms</div>
<div class="t" style="left:83.5px;top:161.84px;font-size:15.35px">BetterSuperList.superSort(int, int)</div>
<div class="t" style="left:0;top:188.33px;width:71px;text-align:right;font-size:14.75px">6ms</div>
<div class="t" style="left:83.5px;top:188.33px;font-size:15.35px">Additive.run(Map, Powerwaf$Limits, PowerwafMetrics)</div>
<div class="t" style="left:0;top:214.82px;width:71px;text-align:right;font-size:14.75px">6ms</div>
<div class="t" style="left:83.5px;top:214.82px;font-size:15.35px">UNKNOWN_PACKAGE.Unknown Native Thread</div>
<div class="t" style="left:0;top:241.31px;width:71px;text-align:right;font-size:14.75px">4ms</div>
<div class="t" style="left:83.5px;top:241.31px;font-size:15.35px">SerializerWithLimits.internalOnField(String, String, Object, Limits)</div>
<div class="t" style="left:0;top:267.80px;width:71px;text-align:right;font-size:14.75px">3ms</div>
<div class="t" style="left:83.5px;top:267.80px;font-size:15.35px">SerializerWithLimits.serialize(Object, String, Limits)</div>
<div class="t" style="left:0;top:294.29px;width:71px;text-align:right;font-size:14.75px">3ms</div>
<div class="t" style="left:83.5px;top:294.29px;font-size:15.35px">ModelTraining.trainModel(PurchaseRepository)</div>
<div class="t" style="left:0;top:320.78px;width:71px;text-align:right;font-size:14.75px">3ms</div>
<div class="t" style="left:83.5px;top:320.78px;font-size:15.35px">ModelTraining.loadFeatures(PurchaseRepository)</div>
</div>
<div class="sb" style="left:1090px;top:575px;width:10px;height:156px"></div>
<div class="a" style="left:1103px;top:570px;width:1px;height:328px;background:#EBECF0;"></div>
<div class="a" style="left:461px;top:524px;width:487px;height:60.5px;background:#28292D;border-radius:4px;box-shadow:0 1px 2px rgba(0,0,0,.35)"></div>
<svg style="left:696.5px;top:584px" width="16" height="12" viewBox="0 0 16 12" ><path d="M0 0h16L8 12z" fill="#28292D"/></svg>
<div class="t wt" style="left:469px;top:535.50px;line-height:20px;height:20px;font-size:14.84px;font-weight:bold">ModelTraining.syncCoefficientsOnFeature(ModelTraining$Feature)</div>
<div class="t wt" style="left:469px;top:560.00px;line-height:20px;height:20px;font-size:15.5px;">com.datadog.demo.profiling.modeltraining</div>
<svg style="left:703px;top:611px" width="10" height="15" viewBox="0 0 10 15" ><path d="M1 1v11l3-2.5 2 4.5 1.8-.8-2-4.3H10z" fill="#111" stroke="#fff" stroke-width=".8"/></svg>
<div class="a" style="left:1104px;top:569px;width:545px;height:1px;background:#EBECF0;"></div>
<div class="a" style="left:1115px;top:576.2px;width:23.5px;height:24px;background:#DFE1E5;border-radius:4px"></div>
<svg style="left:1115px;top:576px" width="24" height="24" viewBox="0 0 24 24" ><g fill="none" stroke="#6C707E" stroke-width="1.3"><rect x="5.6" y="6" width="3.2" height="3.2" rx=".5"/><rect x="15.2" y="6" width="3.2" height="3.2" rx=".5"/><rect x="9.3" y="15.2" width="5.2" height="4.6" rx=".5"/><path d="M7.8 9.4l3.2 5.6M16.2 9.4L13 15"/></g></svg>
<svg style="left:1145px;top:576px" width="24" height="24" viewBox="0 0 24 24" ><g fill="none" stroke="#6C707E" stroke-width="1.3"><rect x="9" y="5.8" width="5.4" height="4.6" rx=".5"/><rect x="5.6" y="15.4" width="3.6" height="4.2" rx=".5"/><rect x="15" y="15.4" width="3.6" height="4.2" rx=".5"/><path d="M10.6 10.5L7.6 15.3M12.9 10.5l3 4.8"/></g></svg>
<svg style="left:1175px;top:576px" width="24" height="24" viewBox="0 0 24 24" ><path d="M7.2 10.8l4.4-4.4 4.4 4.4M7.2 14.2l4.4 4.4 4.4-4.4" fill="none" stroke="#6C707E" stroke-width="1.3"/></svg>
<svg style="left:1205px;top:576px" width="24" height="24" viewBox="0 0 24 24" ><path d="M7.2 6.4l4.4 4.4 4.4-4.4M7.2 18.6l4.4-4.4 4.4 4.4" fill="none" stroke="#6C707E" stroke-width="1.3"/></svg>
<svg style="left:1604px;top:583px" width="6" height="10" viewBox="0 0 6 10" ><path d="M1 1l4 4-4 4" stroke="#6C707E" stroke-width="1.2" fill="none"/></svg>
<div class="a" style="left:1104px;top:607px;width:545px;height:1px;background:#EBECF0;"></div>
<div class="t " style="left:1113px;top:611.50px;line-height:20px;height:20px;font-size:15px;">Method</div>
<div class="a" style="left:1519px;top:608px;width:1px;height:27px;background:#EBECF0;"></div>
<div class="t " style="left:1528px;top:611.50px;line-height:20px;height:20px;font-size:15px;">Contribution</div>
<div class="a" style="left:1104px;top:635px;width:545px;height:1px;background:#EBECF0;"></div>
<svg style="left:1108px;top:645.5px" width="10" height="6" viewBox="0 0 10 6" ><path d="M1 1l4 4 4-4" stroke="#858994" stroke-width="1.3" fill="none"/></svg>
<div class="t" style="left:1131.4px;top:638.50px;width:387.1px;overflow:hidden;font-size:15.35px">ModelTraining.syncCoefficientsOnFeature(ModelTraining$Feature)</div>
<div class="t" style="left:1520px;top:638.50px;width:121.5px;text-align:right;font-size:15px">2s 315ms</div>
<svg style="left:1129px;top:672.0px" width="10" height="6" viewBox="0 0 10 6" ><path d="M1 1l4 4 4-4" stroke="#858994" stroke-width="1.3" fill="none"/></svg>
<div class="t" style="left:1152.4px;top:665.00px;width:366.1px;overflow:hidden;font-size:15.35px">ModelTraining.synchronizeCoefficients(CountDownLatch)</div>
<div class="t" style="left:1520px;top:665.00px;width:121.5px;text-align:right;font-size:15px">100%</div>
<svg style="left:1150px;top:698.5px" width="10" height="6" viewBox="0 0 10 6" ><path d="M1 1l4 4 4-4" stroke="#858994" stroke-width="1.3" fill="none"/></svg>
<div class="t" style="left:1173.4px;top:691.50px;width:345.1px;overflow:hidden;font-size:15.35px">ModelTraining.lambda$computeCoefficients$0(TrainingData)</div>
<div class="t" style="left:1520px;top:691.50px;width:121.5px;text-align:right;font-size:15px">100%</div>
<svg style="left:1171px;top:725.0px" width="10" height="6" viewBox="0 0 10 6" ><path d="M1 1l4 4 4-4" stroke="#858994" stroke-width="1.3" fill="none"/></svg>
<div class="t" style="left:1194.4px;top:718.00px;width:324.1px;overflow:hidden;font-size:15.35px">CompletableFuture$AsyncSupply.run() <span class="g" style="font-size:13px">(java.util.concurrent)</span></div>
<div class="t" style="left:1520px;top:718.00px;width:121.5px;text-align:right;font-size:15px">100%</div>
<svg style="left:1192px;top:751.5px" width="10" height="6" viewBox="0 0 10 6" ><path d="M1 1l4 4 4-4" stroke="#858994" stroke-width="1.3" fill="none"/></svg>
<div class="t" style="left:1215.4px;top:744.50px;width:303.1px;overflow:hidden;font-size:15.35px">ThreadPoolExecutor.runWorker(ThreadPoolExecutor$Worker)</div>
<div class="t" style="left:1520px;top:744.50px;width:121.5px;text-align:right;font-size:15px">100%</div>
<svg style="left:1213px;top:778.0px" width="10" height="6" viewBox="0 0 10 6" ><path d="M1 1l4 4 4-4" stroke="#858994" stroke-width="1.3" fill="none"/></svg>
<div class="t" style="left:1236.4px;top:771.00px;width:282.1px;overflow:hidden;font-size:15.35px">ThreadPoolExecutor$Worker.run() <span class="g" style="font-size:13px">(java.util.concurrent)</span></div>
<div class="t" style="left:1520px;top:771.00px;width:121.5px;text-align:right;font-size:15px">100%</div>
<div class="t" style="left:1257.4px;top:797.50px;width:261.1px;overflow:hidden;font-size:15.35px">Thread.run() <span class="g" style="font-size:13px">(java.lang)</span></div>
<div class="t" style="left:1520px;top:797.50px;width:121.5px;text-align:right;font-size:15px">100%</div>
<div class="sb" style="left:1107px;top:885px;width:141px;height:10px"></div>
<div class="a" style="left:0px;top:897.5px;width:1694px;height:1px;background:#EBECF0;"></div>
<svg style="left:16px;top:911px" width="9" height="9" viewBox="0 0 9 9" ><rect x=".7" y=".7" width="7.6" height="7.6" rx="1.5" fill="none" stroke="#3574F0" stroke-width="1.3"/></svg>
<div class="t g" style="left:29.5px;top:905.00px;line-height:20px;height:20px;font-size:15.6px;">product-recommendation</div>
<div class="t g" style="left:230px;top:905.00px;line-height:20px;height:20px;font-size:15.3px;">src</div>
<div class="t g" style="left:291.5px;top:905.00px;line-height:20px;height:20px;font-size:15.3px;">main</div>
<div class="t g" style="left:349.8px;top:905.00px;line-height:20px;height:20px;font-size:15.3px;">java</div>
<div class="t g" style="left:405px;top:905.00px;line-height:20px;height:20px;font-size:15.3px;">com</div>
<div class="t g" style="left:461px;top:905.00px;line-height:20px;height:20px;font-size:15.3px;">datadog</div>
<div class="t g" style="left:544.6px;top:905.00px;line-height:20px;height:20px;font-size:15.3px;">demo</div>
<div class="t g" style="left:609.8px;top:905.00px;line-height:20px;height:20px;font-size:15.2px;">recommendation</div>
<div class="t g" style="left:773.5px;top:905.00px;line-height:20px;height:20px;font-size:15.07px;">RecommendationController</div>
<div class="t g" style="left:1007px;top:905.00px;line-height:20px;height:20px;font-size:15.3px;">train</div>
<svg style="left:278px;top:911px" width="9" height="9" viewBox="0 0 9 9" ><rect x=".7" y=".7" width="7.6" height="7.6" rx="1.5" fill="none" stroke="#3574F0" stroke-width="1.3"/></svg>
<svg style="left:214.0px;top:910.5px" width="6" height="9" viewBox="0 0 6 9" ><path d="M1 1l3.5 3.5L1 8" stroke="#A8ADBD" stroke-width="1.2" fill="none"/></svg>
<svg style="left:261.5px;top:910.5px" width="6" height="9" viewBox="0 0 6 9" ><path d="M1 1l3.5 3.5L1 8" stroke="#A8ADBD" stroke-width="1.2" fill="none"/></svg>
<svg style="left:334.5px;top:910.5px" width="6" height="9" viewBox="0 0 6 9" ><path d="M1 1l3.5 3.5L1 8" stroke="#A8ADBD" stroke-width="1.2" fill="none"/></svg>
<svg style="left:389.5px;top:910.5px" width="6" height="9" viewBox="0 0 6 9" ><path d="M1 1l3.5 3.5L1 8" stroke="#A8ADBD" stroke-width="1.2" fill="none"/></svg>
<svg style="left:445.0px;top:910.5px" width="6" height="9" viewBox="0 0 6 9" ><path d="M1 1l3.5 3.5L1 8" stroke="#A8ADBD" stroke-width="1.2" fill="none"/></svg>
<svg style="left:528.0px;top:910.5px" width="6" height="9" viewBox="0 0 6 9" ><path d="M1 1l3.5 3.5L1 8" stroke="#A8ADBD" stroke-width="1.2" fill="none"/></svg>
<svg style="left:593.5px;top:910.5px" width="6" height="9" viewBox="0 0 6 9" ><path d="M1 1l3.5 3.5L1 8" stroke="#A8ADBD" stroke-width="1.2" fill="none"/></svg>
<svg style="left:734.5px;top:910.5px" width="6" height="9" viewBox="0 0 6 9" ><path d="M1 1l3.5 3.5L1 8" stroke="#A8ADBD" stroke-width="1.2" fill="none"/></svg>
<svg style="left:969.0px;top:910.5px" width="6" height="9" viewBox="0 0 6 9" ><path d="M1 1l3.5 3.5L1 8" stroke="#A8ADBD" stroke-width="1.2" fill="none"/></svg>
<svg style="left:751px;top:906.5px" width="16" height="16" viewBox="0 0 16 16" ><circle cx="8" cy="8" r="7" fill="#E7EEFD" stroke="#3574F0" stroke-width="1.1" opacity=".85"/><path d="M10.6 5.6a3.3 3.3 0 1 0 0 4.8" fill="none" stroke="#3574F0" stroke-width="1.2"/></svg>
<svg style="left:985px;top:906px" width="16" height="16" viewBox="0 0 16 16" ><circle cx="8" cy="8" r="7" fill="#FCEBEC" stroke="#E55765" stroke-width="1.1"/><path d="M4.5 11V6.5c0-1 .7-1.5 1.5-1.5s1.8.5 1.8 1.5V11M7.8 6.5c0-1 .7-1.5 1.6-1.5s1.6.5 1.6 1.5V11" fill="none" stroke="#E55765" stroke-width="1"/></svg>
<div class="t g" style="left:1414px;top:905.00px;line-height:20px;height:20px;font-size:15.6px;">446:39</div>
<div class="t g" style="left:1480.5px;top:905.00px;line-height:20px;height:20px;font-size:15px;">LF</div>
<div class="t g" style="left:1515px;top:905.00px;line-height:20px;height:20px;font-size:15px;">UTF-8</div>
<div class="t g" style="left:1577px;top:905.00px;line-height:20px;height:20px;font-size:15px;">4 spaces</div>
<svg style="left:1658px;top:907px" width="17" height="15" viewBox="0 0 17 15" ><rect x="1" y="6" width="10" height="8" rx="1.5" fill="none" stroke="#6C707E" stroke-width="1.3"/><path d="M9 6V4a3 3 0 0 1 6 0v1" fill="none" stroke="#6C707E" stroke-width="1.3"/></svg>
</div>
</body></html>
